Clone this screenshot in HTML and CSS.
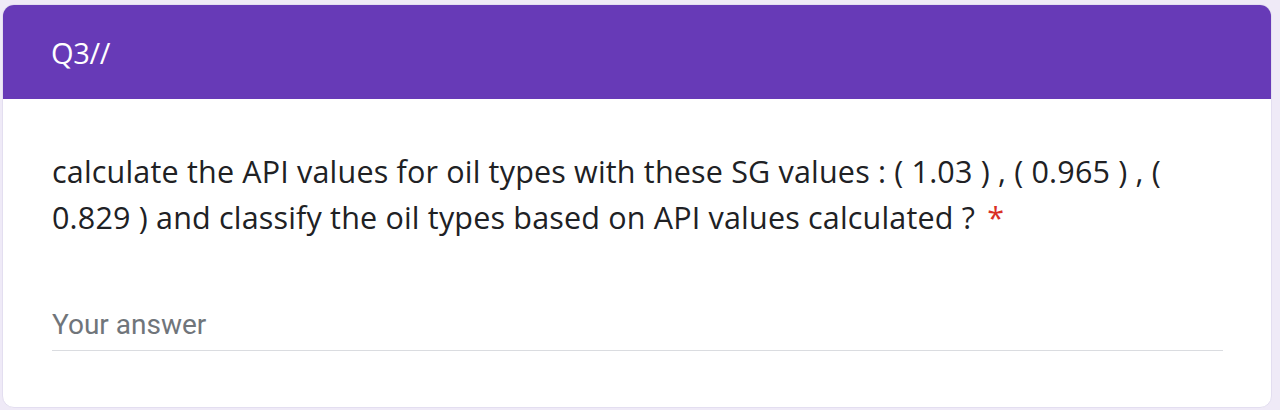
FILE: index.html
```html
<!DOCTYPE html>
<html>
<head>
<meta charset="utf-8">
<link rel="stylesheet" href="styles.css">
</head>
<body>
<div class="card">
  <div class="header"><span class="title">Q3//</span></div>
  <div class="content">
    <div class="question">calculate the API values for oil types with these SG values : ( 1.03 ) , ( 0.965 ) , ( 0.829 ) and classify the oil types based on API values calculated ?<span class="req">*</span></div>
    <div class="answer"><span class="placeholder">Your answer</span></div>
  </div>
</div>
</body>
</html>
```
FILE: styles.css
```css
html, body {
  margin: 0;
  padding: 0;
  background: #efeaf7;
  height: 410px;
  overflow: hidden;
}
.card {
  margin: 4px 0 0 2px;
  width: 1270px;
  height: 404px;
  background: #ffffff;
  border-radius: 12px;
  border: 1px solid #e3def0;
  box-sizing: border-box;
  overflow: hidden;
}
.header {
  height: 94px;
  background: #673ab7;
  display: flex;
  align-items: center;
  padding-left: 48px;
}
.title {
  color: #ffffff;
  font-family: "Open Sans", sans-serif;
  font-size: 29px;
  letter-spacing: -0.3px;
}
.content {
  padding: 49px 48px 0 49px;
}
.question {
  font-family: "Open Sans", sans-serif;
  font-size: 30.5px;
  line-height: 46px;
  color: #202124;
  max-width: 1150px;
  letter-spacing: 0.18px;
}
.req {
  color: #d93025;
  margin-left: 12px;
}
.answer {
  margin-top: 68px;
  width: 1171px;
  border-bottom: 1px solid #dadce0;
  padding-bottom: 9px;
}
.placeholder {
  font-family: Roboto, sans-serif;
  font-size: 28px;
  color: #70757a;
}
```
